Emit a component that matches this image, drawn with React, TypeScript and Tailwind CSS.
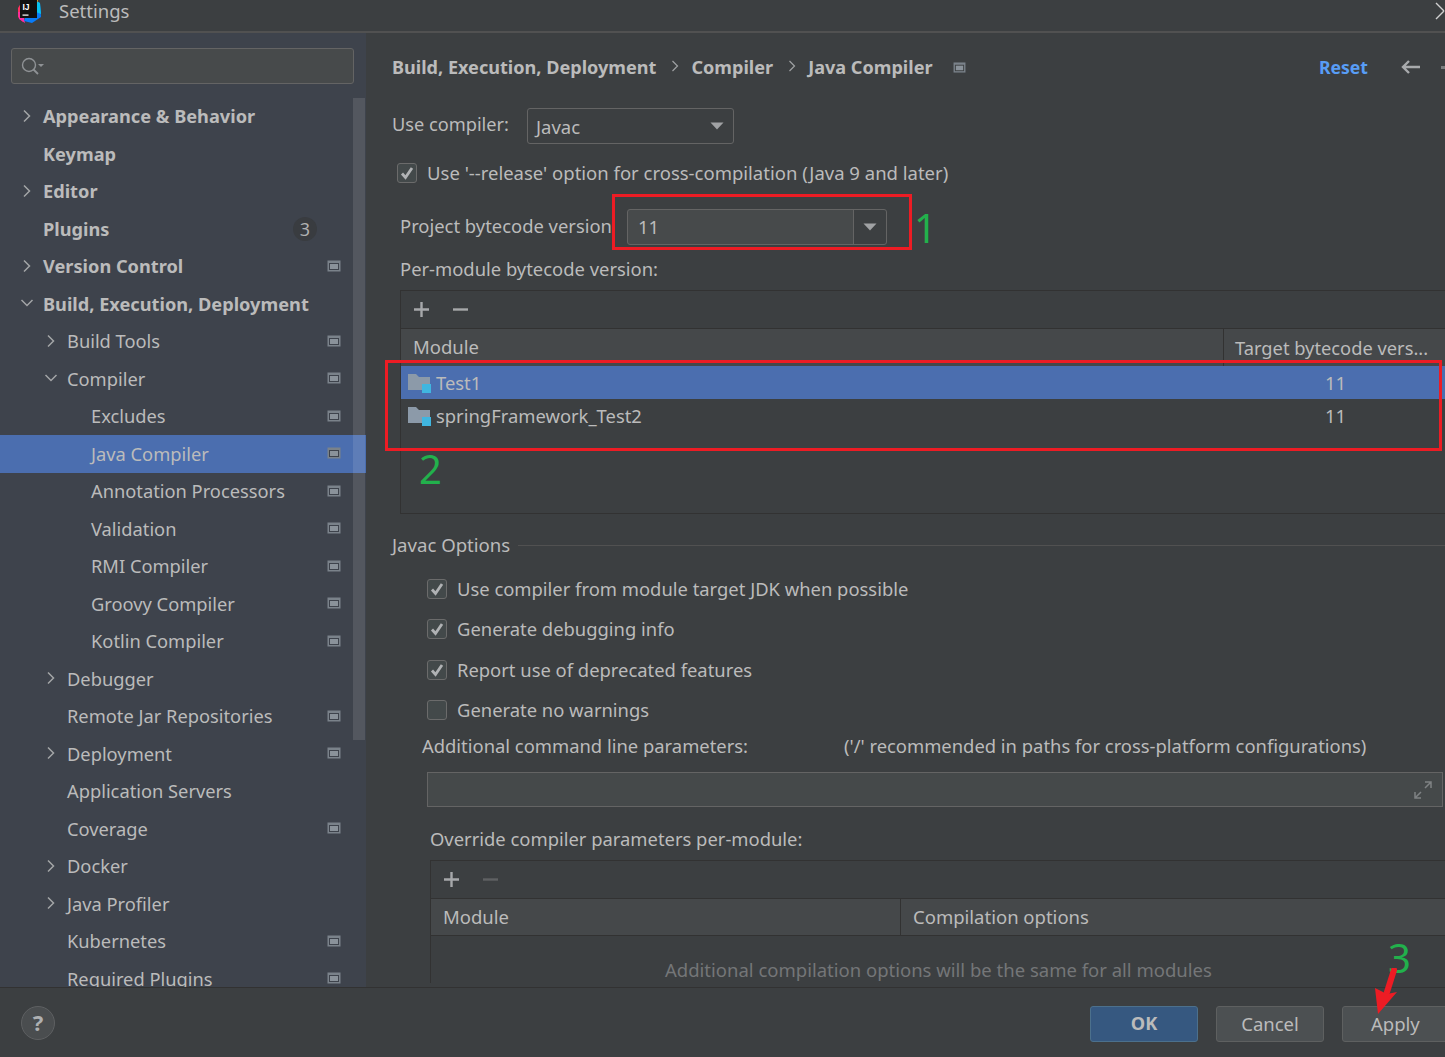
import React from 'react';

type NavItem = { label: string; level: number; arrow?: 'right' | 'down'; pin?: boolean; bold?: boolean; selected?: boolean; badge?: string };

const navItems: NavItem[] = [
  { label: 'Appearance & Behavior', level: 0, arrow: 'right', bold: true },
  { label: 'Keymap', level: 0, bold: true },
  { label: 'Editor', level: 0, arrow: 'right', bold: true },
  { label: 'Plugins', level: 0, bold: true, badge: '3' },
  { label: 'Version Control', level: 0, arrow: 'right', bold: true, pin: true },
  { label: 'Build, Execution, Deployment', level: 0, arrow: 'down', bold: true },
  { label: 'Build Tools', level: 1, arrow: 'right', pin: true },
  { label: 'Compiler', level: 1, arrow: 'down', pin: true },
  { label: 'Excludes', level: 2, pin: true },
  { label: 'Java Compiler', level: 2, pin: true, selected: true },
  { label: 'Annotation Processors', level: 2, pin: true },
  { label: 'Validation', level: 2, pin: true },
  { label: 'RMI Compiler', level: 2, pin: true },
  { label: 'Groovy Compiler', level: 2, pin: true },
  { label: 'Kotlin Compiler', level: 2, pin: true },
  { label: 'Debugger', level: 1, arrow: 'right' },
  { label: 'Remote Jar Repositories', level: 1, pin: true },
  { label: 'Deployment', level: 1, arrow: 'right', pin: true },
  { label: 'Application Servers', level: 1 },
  { label: 'Coverage', level: 1, pin: true },
  { label: 'Docker', level: 1, arrow: 'right' },
  { label: 'Java Profiler', level: 1, arrow: 'right' },
  { label: 'Kubernetes', level: 1, pin: true },
  { label: 'Required Plugins', level: 1, pin: true },
];

const levelPad = ['pl-[43px]', 'pl-[67px]', 'pl-[91px]'];
const arrowLeft = ['left-[20px]', 'left-[44px]', 'left-[68px]'];

function PinIcon() {
  return (
    <svg width="14" height="12" viewBox="0 0 14 12" className="shrink-0">
      <rect x="0.5" y="0.5" width="13" height="11" fill="#7a828a" />
      <rect x="2" y="3" width="10" height="7" fill="#3e434c" />
      <rect x="3" y="4" width="8" height="5" fill="#8a929a" />
    </svg>
  );
}

function Arrow({ dir }: { dir: 'right' | 'down' }) {
  return (
    <svg width="14" height="14" viewBox="0 0 14 14" fill="none" stroke="#a3a5a7" strokeWidth="1.5">
      {dir === 'right' ? <path d="M4 1.5 L9.5 7 L4 12.5" /> : <path d="M1.5 4 L7 9.5 L12.5 4" />}
    </svg>
  );
}

function Caret() {
  return (
    <svg width="14" height="8" viewBox="0 0 14 8"><path d="M0.5 0.5 H13.5 L7 7.5 Z" fill="#a0a2a4" /></svg>
  );
}

function Checkbox({ checked }: { checked: boolean }) {
  return (
    <span className="flex h-[20px] w-[20px] shrink-0 items-center justify-center rounded-[3px] border border-[#6b6b6b] bg-[#43494a]">
      {checked && (
        <svg width="14" height="14" viewBox="0 0 14 14" fill="none" stroke="#b0b2b4" strokeWidth="2.8">
          <path d="M2 7.5 L5.5 11.5 L12 2" />
        </svg>
      )}
    </span>
  );
}

function FolderIcon() {
  return (
    <svg width="24" height="20" viewBox="0 0 24 20" className="shrink-0">
      <path d="M0 1 H8 L11 4 H22 V17 H0 Z" fill="#8c9aa9" />
      <rect x="14" y="11" width="9" height="9" fill="#40b6e0" />
    </svg>
  );
}

function Logo() {
  return (
    <svg width="24" height="24" viewBox="0 0 24 24" className="shrink-0">
      <path d="M1 8 L6 0 L14 0 L6 22 L1 17 Z" fill="#fe315d" />
      <path d="M1 12 L6 12 L8 23 L2 19 Z" fill="#fc2ca6" />
      <path d="M14 0 L23 3 L24 17 L15 23 L7 21 Z" fill="#087cfa" />
      <path d="M18 0 L23 3 L24 14 L19 12 Z" fill="#07c3f2" />
      <path d="M10 0 L21 0 L20 3 Z" fill="#f9a512" />
      <rect x="3" y="0" width="17" height="18" fill="#111111" />
      <text x="5.5" y="10" fontSize="8.5" fontWeight="700" fontFamily="Liberation Sans, sans-serif" fill="#ffffff">IJ</text>
      <rect x="5.5" y="14.5" width="6" height="1.2" fill="#ffffff" />
    </svg>
  );
}

function Sidebar() {
  return (
    <div className="relative h-full w-[366px] shrink-0 overflow-hidden bg-[#3e434c]">
      <div className="mx-[11px] mt-[15px] flex h-[36px] w-[343px] items-center rounded-[3px] border border-[#646464] bg-[#474a4b] pl-[8px]">
        <svg width="24" height="20" viewBox="0 0 24 20" fill="none" stroke="#8f9295" strokeWidth="1.4">
          <circle cx="9" cy="9" r="6.5" />
          <path d="M13.5 13.5 L18 18" strokeWidth="1.8" />
          <path d="M18 8 H24 L21 11 Z" fill="#8f9295" stroke="none" />
        </svg>
      </div>
      <div className="mt-[13.5px]">
        {navItems.map((item) => (
          <div
            key={item.label}
            className={`relative flex h-[37.5px] items-center ${levelPad[item.level]} ${item.selected ? 'bg-[#4b6eaf]' : ''}`}
          >
            {item.arrow && (
              <span className={`absolute ${arrowLeft[item.level]} top-[11px] flex`}>
                <Arrow dir={item.arrow} />
              </span>
            )}
            <span className={`leading-[26px] text-[#bbbbbb] ${item.bold ? 'text-[18.2px] font-bold' : 'text-[18.3px]'}`}>{item.label}</span>
            {item.badge && (
              <span className="absolute left-[293px] top-[7px] flex h-[24px] w-[24px] items-center justify-center rounded-full bg-[#393c40] text-[18px] text-[#b0b0b0]">
                {item.badge}
              </span>
            )}
            {item.pin && (
              <span className="absolute left-[327px] top-[12px] flex">
                <PinIcon />
              </span>
            )}
          </div>
        ))}
      </div>
      {/* scrollbar */}
      <div className="absolute right-[1px] top-[65px] h-[642px] w-[12px] bg-[#ffffff1c]" />
    </div>
  );
}

function ModuleRow({ name, version, selected }: { name: string; version: string; selected?: boolean }) {
  return (
    <div className={`flex h-[33px] items-center pl-[7px] ${selected ? 'bg-[#4b6eaf]' : ''}`}>
      <FolderIcon />
      <span className="ml-[4px] w-[889px] text-[18.4px] text-[#bbbbbb]">{name}</span>
      <span className="text-[18.5px] text-[#bbbbbb]">{version}</span>
    </div>
  );
}

function OptionRow({ label, checked, className }: { label: string; checked: boolean; className: string }) {
  return (
    <div className={`flex h-[24px] items-center gap-[10px] pl-[61px] ${className}`}>
      <Checkbox checked={checked} />
      <span className="whitespace-nowrap text-[18.4px] text-[#bbbbbb]">{label}</span>
    </div>
  );
}

function Crumb() {
  return (
    <svg width="8" height="12" viewBox="0 0 8 12" fill="none" stroke="#a0a2a4" strokeWidth="1.2" className="mb-[3px] ml-[15px] mr-[12px]"><path d="M1.5 1 L6.5 6 L1.5 11" /></svg>
  );
}

function Content() {
  return (
    <div className="h-full min-w-0 flex-1 overflow-hidden bg-[#3c3f41]">
      <div className="mt-[14px] flex h-[40px] items-center pl-[26px] pr-[13px] pt-[1px] text-[18.1px] font-bold text-[#bbbbbb]">
        <span className="whitespace-nowrap">Build, Execution, Deployment</span>
        <Crumb />
        <span>Compiler</span>
        <Crumb />
        <span>Java Compiler</span>
        <span className="ml-[20px] flex"><svg width="13" height="11" viewBox="0 0 14 12"><rect x="0.5" y="0.5" width="13" height="11" fill="#7a828a" /><rect x="2" y="3" width="10" height="7" fill="#3c3f41" /><rect x="3" y="4" width="8" height="5" fill="#8a929a" /></svg></span>
        <span className="ml-auto text-[17.6px] text-[#589df6]">Reset</span>
        <svg width="20" height="16" viewBox="0 0 20 16" fill="none" stroke="#a8aaac" strokeWidth="2.4" className="ml-[32px] mb-[2px] shrink-0"><path d="M9 2 L3 8 L9 14 M3 8 H20" /></svg>
        <span className="ml-[21px] mr-[-13px] h-[3px] w-[4px] shrink-0 bg-[#7a7c7e]" />
      </div>

      <div className="mt-[21px] flex h-[36px] items-center pl-[26px]">
        <span className="w-[135px] pb-[2px] text-[18.2px] text-[#bbbbbb]">Use compiler:</span>
        <div className="flex h-[36px] w-[207px] items-center justify-between rounded-[3px] border border-[#646464] pl-[8px] pr-[9px]">
          <span className="pt-[2px] text-[18.5px] text-[#bbbbbb]">Javac</span>
          <Caret />
        </div>
      </div>

      <div className="mt-[16px] flex h-[26px] items-center gap-[10px] pl-[31px]">
        <Checkbox checked />
        <span className="whitespace-nowrap text-[18.5px] text-[#bbbbbb]">Use '--release' option for cross-compilation (Java 9 and later)</span>
      </div>

      <div className="mt-[23px] flex h-[36px] items-center pl-[34px]">
        <span className="w-[227px] whitespace-nowrap pb-[2px] text-[18.4px] text-[#bbbbbb]">Project bytecode version</span>
        <div className="flex h-[36px] w-[260px] items-center rounded-[3px] border border-[#646464] bg-[#474a4b]">
          <span className="flex-1 pl-[10px] text-[18.5px] text-[#bbbbbb]">11</span>
          <span className="flex h-full w-[33px] items-center justify-center rounded-r-[3px] border-l border-[#646464] bg-[#3c3f41]">
            <Caret />
          </span>
        </div>
      </div>

      <div className="mt-[12px] flex h-[24px] items-center pl-[34px] text-[18.4px] text-[#bbbbbb]">Per-module bytecode version:</div>

      <div className="ml-[34px] mt-[9px] h-[224px] border-b border-l border-t border-[#323232]">
        <div className="flex h-[37px] items-center gap-[22px] pl-[12px]">
          <svg width="17" height="17" viewBox="0 0 17 17" stroke="#a6a8aa" strokeWidth="2.4"><path d="M8.5 1 V16 M1 8.5 H16" /></svg>
          <svg width="17" height="17" viewBox="0 0 17 17" stroke="#a6a8aa" strokeWidth="2.4"><path d="M1 8.5 H16" /></svg>
        </div>
        <div className="flex h-[38px] items-end border-t border-[#323232] bg-[#45484a]">
          <span className="w-[822px] pb-[6px] pl-[12px] text-[18.5px] leading-[26px] text-[#bbbbbb]">Module</span>
          <span className="flex h-full items-center whitespace-nowrap border-l border-[#323232] pl-[11px] text-[18.3px] text-[#bbbbbb]">Target bytecode vers...</span>
        </div>
        <ModuleRow name="Test1" version="11" selected />
        <ModuleRow name="springFramework_Test2" version="11" />
      </div>

      <div className="mt-[19px] flex h-[24px] items-center gap-[8px] pl-[26px]">
        <span className="whitespace-nowrap text-[18.6px] text-[#bbbbbb]">Javac Options</span>
        <span className="h-px flex-1 bg-[#515151]" />
      </div>

      <OptionRow className="mt-[20px]" checked label="Use compiler from module target JDK when possible" />
      <OptionRow className="mt-[16px]" checked label="Generate debugging info" />
      <OptionRow className="mt-[17px]" checked label="Report use of deprecated features" />
      <OptionRow className="mt-[16px]" checked={false} label="Generate no warnings" />

      <div className="mt-[12px] flex h-[24px] items-center pl-[56px] text-[18.4px] text-[#bbbbbb]">
        <span className="w-[422px] whitespace-nowrap">Additional command line parameters:</span>
        <span className="whitespace-nowrap">('/' recommended in paths for cross-platform configurations)</span>
      </div>

      <div className="ml-[61px] mr-[2px] mt-[14px] flex h-[35px] items-center justify-end border border-[#646464] bg-[#45494a] pr-[10px]">
        <svg width="18" height="18" viewBox="0 0 18 18" fill="none" stroke="#7f8284" strokeWidth="1.5"><path d="M11 1 H17 V7 M17 1 L11 7 M1 11 V17 H7 M1 17 L7 11" /></svg>
      </div>

      <div className="mt-[20px] flex h-[24px] items-center pl-[64px] text-[18.4px] text-[#bbbbbb]">Override compiler parameters per-module:</div>

      <div className="ml-[64px] mt-[9px] border-l border-t border-[#323232]">
        <div className="flex h-[37px] items-center gap-[22px] pl-[12px]">
          <svg width="17" height="17" viewBox="0 0 17 17" stroke="#a6a8aa" strokeWidth="2.4"><path d="M8.5 1 V16 M1 8.5 H16" /></svg>
          <svg width="17" height="17" viewBox="0 0 17 17" stroke="#5f6163" strokeWidth="2.4"><path d="M1 8.5 H16" /></svg>
        </div>
        <div className="flex h-[38px] items-center border-b border-t border-[#323232] bg-[#45484a] text-[18.5px] text-[#bbbbbb]">
          <span className="w-[469px] pl-[12px]">Module</span>
          <span className="flex h-full items-center border-l border-[#323232] pl-[12px]">Compilation options</span>
        </div>
        <div className="mt-[21px] whitespace-nowrap pl-[234px] text-[18.5px] leading-[26px] text-[#747678]">Additional compilation options will be the same for all modules</div>
      </div>
    </div>
  );
}

function Annotations() {
  return (
    <>
      <div className="absolute left-[612px] top-[194px] h-[56px] w-[300px] border-[3px] border-[#ed1c24]" />
      <div className="absolute left-[385px] top-[360px] h-[91px] w-[1057px] border-[3px] border-[#ed1c24]" />
      <span className="absolute left-[914px] top-[204px] text-[40px] leading-[48px] text-[#22b14c]">1</span>
      <span className="absolute left-[419px] top-[445px] text-[40px] leading-[48px] text-[#22b14c]">2</span>
      <span className="absolute left-[1388px] top-[934px] text-[40px] leading-[48px] text-[#22b14c]">3</span>
      <svg width="40" height="50" viewBox="0 0 40 50" className="absolute left-[1368px] top-[968px]">
        <path d="M26 2 L19 24" stroke="#ed1c24" strokeWidth="6" strokeLinecap="round" />
        <path d="M7 20 L10 46 L29 24 L19 26 Z" fill="#ed1c24" />
      </svg>
    </>
  );
}

export default function App() {
  return (
    <div className="relative flex h-[1057px] w-[1445px] flex-col overflow-hidden bg-[#3c3f41] font-['Noto_Sans',sans-serif]">
      <div className="flex h-[33px] shrink-0 items-start border-b-2 border-[#515151]">
        <span className="ml-[17px] flex"><Logo /></span>
        <span className="ml-[18px] text-[18.5px] leading-[22px] text-[#bbbbbb]">Settings</span>
        <svg width="10" height="18" viewBox="0 0 10 18" fill="none" stroke="#d0d0d0" strokeWidth="1.4" className="ml-auto mt-[2px]"><path d="M1 1 L9 9 M1 17 L9 9" /></svg>
      </div>
      <div className="flex h-[954px] shrink-0">
        <Sidebar />
        <Content />
      </div>
      <div className="flex flex-1 items-center border-t border-[#323232] pl-[21px]">
        <span className="flex h-[34px] w-[34px] items-center justify-center rounded-full border border-[#5e6062] bg-[#4a4d4f] text-[22px] font-bold text-[#aeb0b2]">?</span>
        <div className="ml-auto flex gap-[18px] pt-[2px]">
          <span className="flex h-[36px] w-[108px] items-center justify-center rounded-[3px] border border-[#4c708c] bg-[#365880] text-[18.2px] font-bold text-[#bbbbbb]">OK</span>
          <span className="flex h-[36px] w-[108px] items-center justify-center rounded-[3px] border border-[#5e6060] bg-[#4c5052] text-[18.5px] text-[#bbbbbb]">Cancel</span>
          <span className="mr-[-17px] flex h-[36px] w-[120px] items-center rounded-[3px] border border-[#5e6060] bg-[#4c5052] pl-[28px] text-[18.5px] text-[#bbbbbb]">Apply</span>
        </div>
      </div>
      <Annotations />
    </div>
  );
}
